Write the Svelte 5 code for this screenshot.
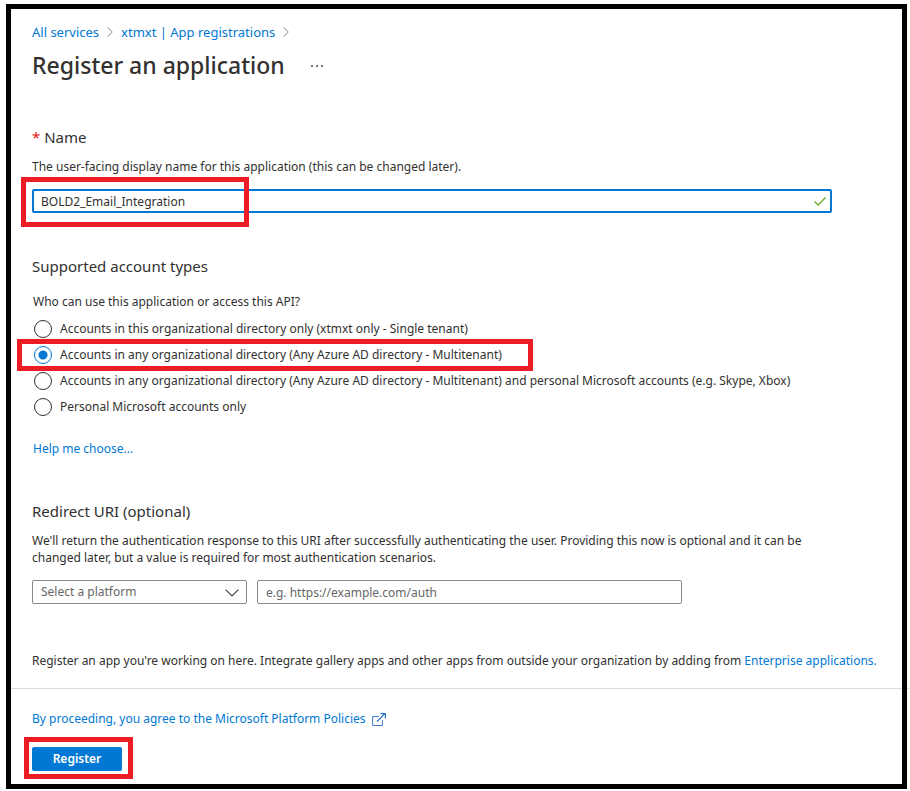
<script>
  const accountTypes = [
    { id: 'single', label: 'Accounts in this organizational directory only (xtmxt only - Single tenant)' },
    { id: 'multi', label: 'Accounts in any organizational directory (Any Azure AD directory - Multitenant)' },
    {
      id: 'multi-personal',
      label:
        'Accounts in any organizational directory (Any Azure AD directory - Multitenant) and personal Microsoft accounts (e.g. Skype, Xbox)'
    },
    { id: 'personal', label: 'Personal Microsoft accounts only' }
  ];
  let selected = $state('multi');
  let name = $state('BOLD2_Email_Integration');
  let redirectUri = $state('');
</script>

{#snippet chevron()}
  <svg class="crumb-sep" width="6" height="10" viewBox="0 0 6 10" aria-hidden="true">
    <path d="M.6.5 5.3 5 .6 9.500" fill="none" stroke="#8a8a8a" />
  </svg>
{/snippet}

<main class="frame">
  <nav class="crumbs" aria-label="Breadcrumb">
    <a href="#services">All services</a>
    {@render chevron()}
    <a href="#registrations">xtmxt | App registrations</a>
    {@render chevron()}
  </nav>

  <header class="title">
    <h1>Register an application</h1>
    <button class="more" type="button" aria-label="More options">
      <svg width="12" height="2" viewBox="0 0 12 2" aria-hidden="true">
        <path d="M0 0h2v2H0zM5 0h2v2H5zM10 0h2v2h-2z" fill="#777" />
      </svg>
    </button>
  </header>

  <form onsubmit={(e) => e.preventDefault()}>
    <section class="block name">
      <h2><span class="required">*</span> <label for="app-name">Name</label></h2>
      <p>The user-facing display name for this application (this can be changed later).</p>
      <div class="name-field">
        <input id="app-name" type="text" bind:value={name} />
        <svg class="tick" width="12" height="9" viewBox="0 0 12 9" aria-hidden="true">
          <path d="M.5 4.500 4.200 8 11.500.6" fill="none" stroke="#6bb331" stroke-width="1.400" />
        </svg>
        <span class="mark mark-name"></span>
      </div>
    </section>

    <section class="block">
      <h2>Supported account types</h2>
      <fieldset>
        <legend>Who can use this application or access this API?</legend>
        {#each accountTypes as type (type.id)}
          <div class="option">
            <input id={type.id} type="radio" name="account-type" value={type.id} bind:group={selected} />
            <label for={type.id}>{type.label}</label>
            {#if type.id === 'multi'}<span class="mark mark-option"></span>{/if}
          </div>
        {/each}
      </fieldset>
      <p class="help"><a href="#help">Help me choose...</a></p>
    </section>

    <section class="block">
      <h2>Redirect URI (optional)</h2>
      <p class="redirect-text">
        We'll return the authentication response to this URI after successfully authenticating the user. Providing this now is optional and it can be
        changed later, but a value is required for most authentication scenarios.
      </p>
      <div class="redirect">
        <div class="platform">
          <select aria-label="Platform">
            <option>Select a platform</option>
          </select>
          <svg width="14" height="8" viewBox="0 0 14 8" aria-hidden="true">
            <path d="M.6.600 7 7 13.400.6" fill="none" stroke="#444" stroke-width="1.200" />
          </svg>
        </div>
        <input
          class="uri"
          type="text"
          aria-label="Redirect URI"
          placeholder="e.g. https://example.com/auth"
          bind:value={redirectUri}
        />
      </div>
    </section>

    <p class="gallery">
      Register an app you're working on here. Integrate gallery apps and other apps from outside your organization by adding from
      <a href="#enterprise">Enterprise applications.</a>
    </p>

    <footer>
      <a class="policies" href="#policies">
        By proceeding, you agree to the Microsoft Platform Policies
        <svg width="14" height="13" viewBox="0 0 14 13" aria-hidden="true">
          <path d="M7 3.500H.6v9h9.800V7" fill="none" stroke="#3f7fd6" />
          <path d="M5 8.500 12.800.7M8.500.6h4.900v5" fill="none" stroke="#2b6fd0" stroke-width="1.200" />
        </svg>
      </a>
      <div class="submit">
        <button class="register" type="submit">Register</button>
        <span class="mark mark-submit"></span>
      </div>
    </footer>
  </form>
</main>

<style>
  :global(body) {
    margin: 0;
    background: #fff;
  }
  .frame {
    margin: 4px 3px 2px 6px;
    padding: 13px 0 13px 21px;
    border: 5px solid #000;
    font: 12px/18px 'Segoe UI', 'Noto Sans', 'Open Sans', sans-serif;
    color: #323130;
  }
  h1,
  h2,
  p,
  fieldset,
  legend {
    margin: 0;
    padding: 0;
    border: 0;
  }
  a {
    color: #0078d4;
    text-decoration: none;
  }
  input,
  select,
  button {
    box-sizing: border-box;
    margin: 0;
    font: inherit;
    color: inherit;
  }
  .crumbs {
    display: flex;
    align-items: center;
    gap: 8px;
    font-size: 13px;
    line-height: 20px;
  }
  .title {
    display: flex;
    align-items: center;
    gap: 26px;
    margin-top: 7px;
  }
  h1 {
    font-size: 23px;
    font-weight: 500;
    line-height: 32px;
  }
  .more {
    display: flex;
    padding: 2px 0 0;
    border: 0;
    background: none;
  }
  .block {
    margin-top: 43px;
  }
  .name {
    margin-top: 46px;
  }
  h2 {
    margin-bottom: 11px;
    font-size: 15px;
    font-weight: 400;
    line-height: 20px;
  }
  .required {
    color: #e81123;
  }
  .name-field {
    position: relative;
    max-width: 800px;
    margin: 13px 70px 0 0;
  }
  .name-field input {
    display: block;
    width: 100%;
    height: 24px;
    padding: 0 28px 0 7px;
    border: 2px solid #0078d4;
    border-radius: 2px;
    outline: 0;
  }
  .tick {
    position: absolute;
    top: 8px;
    right: 6px;
  }
  .mark {
    position: absolute;
    border: 5px solid #ed1c24;
    pointer-events: none;
  }
  .mark-name {
    inset: -12px auto -14px -11px;
    width: 218px;
  }
  .mark-option {
    inset: -3px -31px -3px -15px;
  }
  .mark-submit {
    inset: -10px -11px -8px -8px;
  }
  fieldset {
    margin-top: 17px;
  }
  legend {
    margin: 0 0 5px 1px;
  }
  .option {
    position: relative;
    display: flex;
    align-items: center;
    gap: 8px;
    width: fit-content;
    height: 26px;
    padding-left: 2px;
  }
  .option input {
    appearance: none;
    flex: none;
    width: 18px;
    height: 18px;
    border: 1px solid #323130;
    border-radius: 50%;
    background: #fff;
  }
  .option input:checked {
    border-color: #0078d4;
    background: radial-gradient(circle, #0078d4 4px, #fff 5px);
  }
  .option label {
    white-space: nowrap;
  }
  .help {
    margin: 20px 0 0 1px;
  }
  .redirect-text {
    max-width: 800px;
    line-height: 17px;
  }
  .redirect {
    display: flex;
    gap: 10px;
    margin: 14px 220px 0 0;
  }
  .platform {
    position: relative;
    flex: 0 0 215px;
  }
  .platform select {
    appearance: none;
    display: block;
    width: 100%;
    height: 24px;
    padding: 0 28px 0 8px;
    border: 1px solid #8a8886;
    border-radius: 2px;
    background: #fff;
    color: #666;
  }
  .platform svg {
    position: absolute;
    top: 9px;
    right: 8px;
    pointer-events: none;
  }
  .uri {
    flex: 1;
    min-width: 0;
    height: 24px;
    padding: 0 8px;
    border: 1px solid #8a8886;
    border-radius: 2px;
  }
  .uri::placeholder {
    color: #666;
    opacity: 1;
  }
  .gallery {
    margin-top: 48px;
  }
  footer {
    position: relative;
    margin: 18px 0 0 -21px;
    padding: 21px 0 0 21px;
    border-top: 1px solid #dcdcdc;
  }
  /* The divider carries on past the frame to the window's edge. */
  footer::after {
    content: '';
    position: absolute;
    top: -1px;
    right: -8px;
    width: 3px;
    height: 1px;
    background: #dcdcdc;
  }
  .policies {
    display: flex;
    align-items: center;
    gap: 6px;
  }
  .submit {
    position: relative;
    width: 90px;
    margin-top: 19px;
  }
  .register {
    display: block;
    width: 100%;
    height: 24px;
    padding: 0;
    border: 0;
    border-radius: 2px;
    background: #0078d4;
    color: #fff;
    font-weight: 600;
  }
</style>
